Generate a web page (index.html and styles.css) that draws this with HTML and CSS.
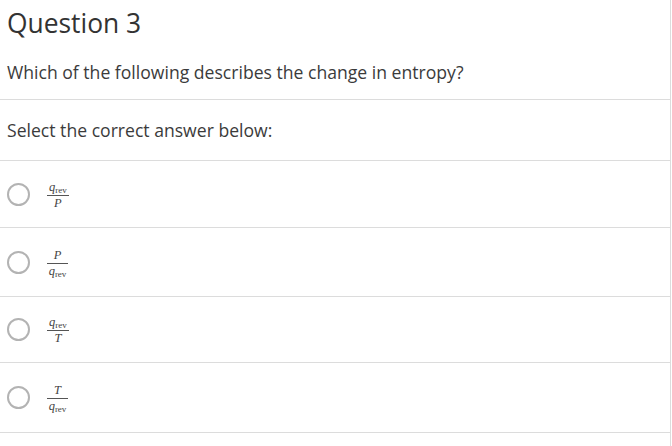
FILE: index.html
```html
<!DOCTYPE html>
<html>
<head>
<meta charset="utf-8">
<link rel="stylesheet" href="styles.css">
</head>
<body>
<div class="panel">
  <div class="head">
    <h1 class="title">Question 3</h1>
    <p class="prompt">Which of the following describes the change in entropy?</p>
  </div>
  <div class="instr">Select the correct answer below:</div>
  <ul class="options">
    <li class="option">
      <span class="radio"></span>
      <span class="frac"><span class="num"><i>q</i><sub>rev</sub></span><span class="den"><i>P</i></span></span>
    </li>
    <li class="option">
      <span class="radio"></span>
      <span class="frac"><span class="num"><i>P</i></span><span class="den"><i>q</i><sub>rev</sub></span></span>
    </li>
    <li class="option">
      <span class="radio"></span>
      <span class="frac"><span class="num"><i>q</i><sub>rev</sub></span><span class="den"><i>T</i></span></span>
    </li>
    <li class="option">
      <span class="radio"></span>
      <span class="frac"><span class="num"><i>T</i></span><span class="den"><i>q</i><sub>rev</sub></span></span>
    </li>
  </ul>
</div>
</body>
</html>
```
FILE: styles.css
```css
html, body {
  margin: 0;
  padding: 0;
  background: #fff;
}
body {
  font-family: "Open Sans", "Liberation Sans", sans-serif;
  color: #3b3b3b;
}
.panel {
  width: 670px;
  border-right: 1px solid #dcdcdc;
  min-height: 446px;
}
.head {
  padding: 0 7px;
  border-bottom: 1px solid #dcdcdc;
  height: 100px;
  box-sizing: border-box;
}
.title {
  margin: 0;
  padding-top: 4px;
  font-size: 26.4px;
  font-weight: 400;
  line-height: 38px;
  color: #333;
}
.prompt {
  margin: 17px 0 0;
  font-size: 17.6px;
  line-height: 26px;
}
.instr {
  height: 61px;
  box-sizing: border-box;
  padding: 17px 7px 0;
  font-size: 17.6px;
  line-height: 26px;
  border-bottom: 1px solid #dcdcdc;
}
.options {
  list-style: none;
  margin: 0;
  padding: 0;
}
.option {
  display: flex;
  align-items: center;
  gap: 17px;
  padding: 0 0 0 7px;
  box-sizing: border-box;
  border-bottom: 1px solid #dcdcdc;
}
.option:nth-child(1) { height: 67px; }
.option:nth-child(2) { height: 69px; }
.option:nth-child(3) { height: 66px; }
.option:nth-child(4) { height: 70px; }
.radio {
  width: 19px;
  height: 19px;
  border: 2px solid #b3b3b3;
  border-radius: 50%;
  flex: none;
}
.frac {
  display: inline-flex;
  flex-direction: column;
  align-items: center;
  font-family: "Liberation Serif", "DejaVu Serif", serif;
  font-size: 12.5px;
  color: #444;
  line-height: 13px;
  margin-top: 2px;
}
.frac i { font-style: italic; }
.frac sub {
  font-size: 9px;
  vertical-align: -2px;
  line-height: 0;
}
.num {
  padding: 0 2px 1px;
  border-bottom: 1px solid #555;
  min-width: 17px;
  text-align: center;
}
.den {
  padding-top: 1px;
}
```
